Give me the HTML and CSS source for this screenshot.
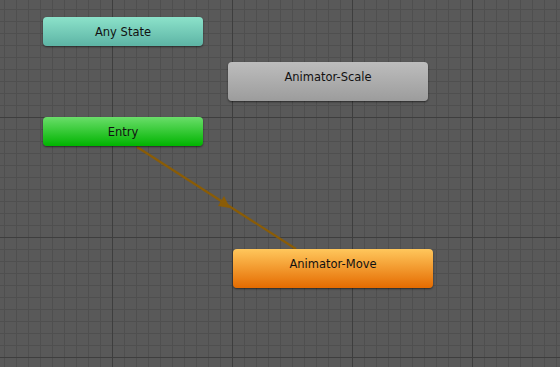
FILE: index.html
```html
<!DOCTYPE html>
<html>
<head>
<meta charset="utf-8">
<link rel="stylesheet" href="styles.css">
</head>
<body>
<div class="graph">
  <svg class="links" width="560" height="367" viewBox="0 0 560 367">
    <line x1="137" y1="147" x2="296" y2="249" stroke="#8a5c06" stroke-width="2.2"/>
    <polygon points="230,208 218,206 224,196" fill="#8a5c06"/>
  </svg>
  <div class="node teal any">Any State</div>
  <div class="node gray scale">Animator-Scale</div>
  <div class="node green entry">Entry</div>
  <div class="node orange move">Animator-Move</div>
</div>
</body>
</html>
```
FILE: styles.css
```css
html, body {
  margin: 0;
  padding: 0;
  width: 560px;
  height: 367px;
  overflow: hidden;
}
.graph {
  position: relative;
  width: 560px;
  height: 367px;
  background-color: #595959;
  background-image:
    linear-gradient(to right, #3e3e3e 0, #3e3e3e 1px, transparent 1px),
    linear-gradient(to bottom, #3e3e3e 0, #3e3e3e 1px, transparent 1px),
    linear-gradient(to right, #4f4f4f 0, #4f4f4f 1px, transparent 1px),
    linear-gradient(to bottom, #4f4f4f 0, #4f4f4f 1px, transparent 1px);
  background-size: 120px 120px, 120px 120px, 12px 12px, 12px 12px;
  background-position: 112px 0, 0 117px, 4px 0, 0 9px;
  font-family: "DejaVu Sans", Verdana, sans-serif;
  font-size: 11.5px;
  color: #111111;
}
.links {
  position: absolute;
  left: 0;
  top: 0;
}
.node {
  position: absolute;
  box-sizing: border-box;
  border-radius: 4px;
  text-align: center;
  box-shadow: 0 1px 2px rgba(0,0,0,0.55);
}
.any, .entry {
  left: 43px;
  width: 160px;
  height: 29px;
  padding-top: 1px;
  line-height: 28px;
}
.any { top: 17px; }
.entry { top: 117px; }
.scale, .move {
  width: 200px;
  height: 39px;
  padding-top: 8px;
  line-height: 15px;
}
.scale { left: 228px; top: 62px; }
.move { left: 233px; top: 249px; }
.teal { background: linear-gradient(to bottom, #8ce2ca, #5db4a5); }
.gray { background: linear-gradient(to bottom, #bdbdbd, #9c9c9c); }
.green { background: linear-gradient(to bottom, #6ade6a, #00b400); }
.orange { background: linear-gradient(to bottom, #ffc75c, #e56b00); }
```
